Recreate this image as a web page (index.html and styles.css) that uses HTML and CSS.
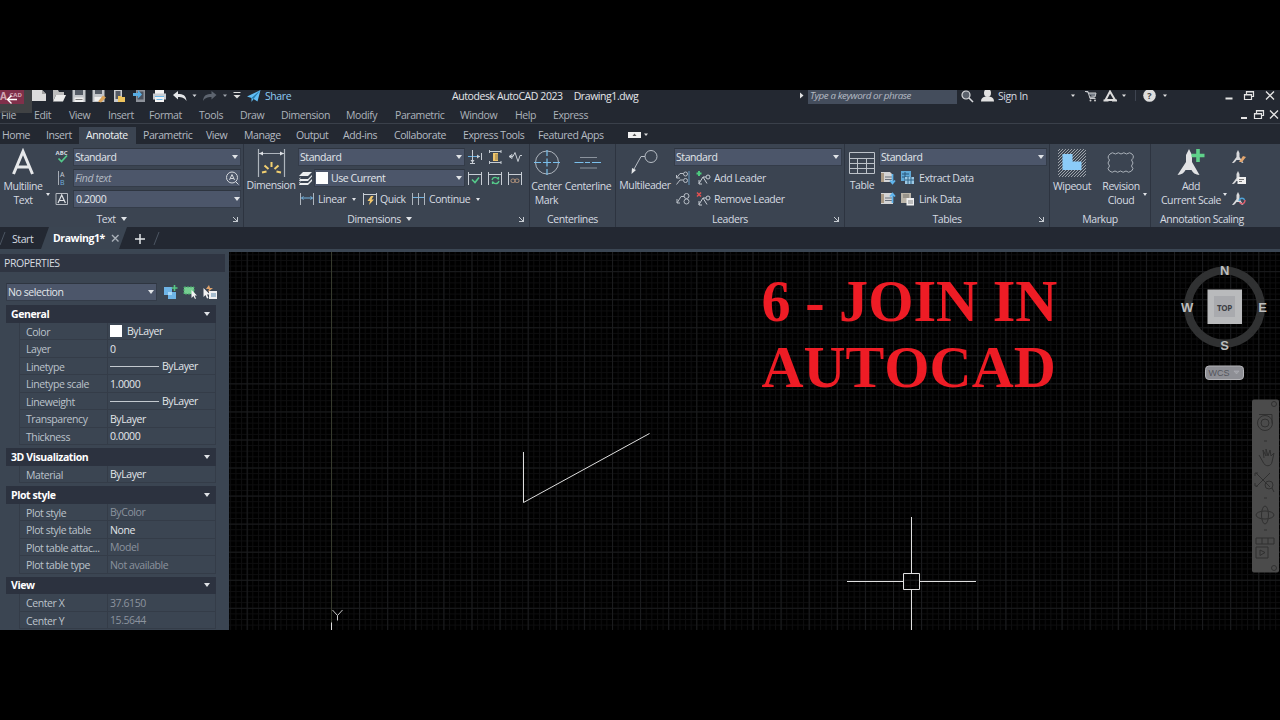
FILE: index.html
```html
<!DOCTYPE html>
<html lang="en">
<head>
  <meta charset="UTF-8">
  <meta name="viewport" content="width=device-width, initial-scale=1.0">
  <title>Autodesk AutoCAD 2023 - Drawing1.dwg</title>
  <link rel="stylesheet" href="styles.css">
</head>
<body>
<div class="app">

  <!-- title bar -->
  <header class="titlebar">
    <div class="back">
      <div class="logo"><b>A</b><span>CAD</span></div>
      <svg width="32" height="23" viewBox="0 0 32 23"><path d="M8 9.500h9M11.500 5.500l-4 4 4 4" fill="none" stroke="#fff" stroke-width="1.300"/></svg>
    </div>
    <div class="qat">
      <svg width="20" height="16" viewBox="0 0 20 16"><path d="M3 0h10l4 4v7H3z" fill="#dcdcdc"/><path d="M13 0v4h4z" fill="#a0a0a0"/></svg>
      <svg width="20" height="16" viewBox="0 0 20 16"><path d="M4 0h5l1 2h5v3H7l-3 6z" fill="#bdbdbd"/><path d="M7 5h10l-3 6.500H4z" fill="#ededed"/></svg>
      <svg width="20" height="16" viewBox="0 0 20 16"><path d="M3.500 0h13v12h-13z" fill="#c3c6ca"/><path d="M6 0h8v5H6z" fill="#555c66"/><path d="M5.500 7.500h9V12h-9z" fill="#f0f0f0"/><path d="M6.500 9.500h7" stroke="#777"/></svg>
      <svg width="20" height="16" viewBox="0 0 20 16"><path d="M3.500 0h12v12h-12z" fill="#c3c6ca"/><path d="M6 0h7v4H6z" fill="#555c66"/><path d="M5.500 7h7v4h-7z" fill="#f0f0f0"/><path d="M9 11.500l5-6 3 2-5 5z" fill="#dba45a"/></svg>
      <svg width="20" height="16" viewBox="0 0 20 16"><path d="M5 0h8v12H5z" fill="#c9cbce"/><path d="M6.500 1h5v8h-5z" fill="#555b66"/><path d="M9 6h3l1 1h3v5H9z" fill="#efc45d"/></svg>
      <svg width="20" height="16" viewBox="0 0 20 16"><path d="M7 0h9v12H7z" fill="#8d929a"/><path d="M8.500 1.500h6v8h-6z" fill="#4c535f"/><path d="M4 3h5V0l4 4.500-4 4V6H4z" fill="#58aee4"/></svg>
      <svg width="20" height="16" viewBox="0 0 20 16"><path d="M6 0h9v4H6z" fill="#f2f2f2"/><path d="M4 3.500h13v6H4z" fill="#c8cdd2"/><path d="M6 7h9v5H6z" fill="#f4f4f4"/><path d="M6 6.500h9M7.500 9.500h6" stroke="#6bb7e8"/></svg>
      <svg width="20" height="16" viewBox="0 0 20 16"><path d="M4 5l5-4v3c5 0 8 1 8.500 7-2-3-4-4-8.500-4v2.500z" fill="#e4e6e8"/></svg>
      <svg width="11" height="16" viewBox="0 0 11 16"><path d="M3.500 4.500h4l-2 2.500z" fill="#d5d8dc"/></svg>
      <svg width="20" height="16" viewBox="0 0 20 16"><path d="M16.500 5l-5-4v3c-5 0-8 1-8.500 7 2-3 4-4 8.500-4v2.500z" fill="#5d646f"/></svg>
      <svg width="10" height="16" viewBox="0 0 10 16"><path d="M3 4.500h4L5 7z" fill="#a0a5ac"/></svg>
      <svg width="14" height="16" viewBox="0 0 14 16"><path d="M3.500 2.500h7" stroke="#ddd"/><path d="M3.500 5h7L7 8.500z" fill="#ddd"/></svg>
      <svg width="20" height="16" viewBox="0 0 20 16"><path d="M3 6.500L16.500 0l-3 11.500-4-2.500-2 3V8z" fill="#62bdf4"/><path d="M7.500 8l9-8-7 9" fill="#247aac"/></svg>
      <span class="share">Share</span>
    </div>
    <div class="doc-title"><span>Autodesk AutoCAD 2023</span><span>Drawing1.dwg</span></div>
    <div class="search-area">
      <svg width="10" height="16" viewBox="0 0 10 16"><path d="M1 2.500l3.500 3L1 8.500z" fill="#e2e2e2"/></svg>
      <div class="search">Type a keyword or phrase</div>
      <svg width="20" height="16" viewBox="0 0 20 16"><circle cx="9" cy="5" r="4" fill="#5a616c" stroke="#d8dadd" stroke-width="1.200"/><path d="M12 8l4 4" stroke="#d8dadd" stroke-width="1.600"/></svg>
      <svg width="21" height="16" viewBox="0 0 21 16"><ellipse cx="10.500" cy="3" rx="3.500" ry="4" fill="#e2e2e2"/><path d="M4 11.500c0-4 3-5 6.500-5s6.500 1 6.500 5z" fill="#e2e2e2"/></svg>
      <span class="sign">Sign In</span>
      <svg class="acct" width="104" height="16" viewBox="0 0 104 16">
        <path d="M3 4.500h4L5 7z" fill="#e2e2e2"/>
        <path d="M17 1.500h3l2 7h5.500M20.500 3H28l-1 4h-5" fill="#777e88" stroke="#c8cacd"/><circle cx="22.500" cy="10.500" r="1" fill="#ccc"/><circle cx="27" cy="10.500" r="1" fill="#ccc"/>
        <path d="M42 1.500L37.500 10h9.500z" fill="none" stroke="#dcdcdc" stroke-width="2"/><path d="M35.500 10.500h5M44 10.500h5" stroke="#dcdcdc" stroke-width="2"/>
        <path d="M54 4.500h4L56 7z" fill="#e2e2e2"/><path d="M67.500 0v11" stroke="#3e4450"/>
        <circle cx="81.500" cy="5.500" r="6.300" fill="#dedede"/><text x="81.300" y="9" text-anchor="middle" class="qmark">?</text>
        <path d="M95 4.500h4L97 7z" fill="#e2e2e2"/>
      </svg>
      <svg class="win" width="54" height="16" viewBox="0 0 54 16" fill="none" stroke="#e4e4e4"><path d="M1.500 8.500h7" stroke-width="2"/><path d="M20.500 4.500h7v5h-7zM22.500 4V1.500h7v5H28" stroke-width="1.200"/><path d="M20 4.800h8M22 1.800h8" stroke-width="1.500"/><path d="M42 1.500l8 8M50 1.500l-8 8" stroke-width="1.300"/></svg>
    </div>
  </header>

  <nav class="menubar">
    <span>File</span><span>Edit</span><span>View</span><span>Insert</span><span>Format</span><span>Tools</span><span>Draw</span><span>Dimension</span><span>Modify</span><span>Parametric</span><span>Window</span><span>Help</span><span>Express</span>
    <svg width="42" height="14" viewBox="0 0 42 14" fill="none" stroke="#e4e4e4"><path d="M3 10h6" stroke-width="2"/><path d="M16.500 5.500h7v5h-7zM18.500 5V2.500h7v5H24" stroke-width="1.200"/><path d="M16 5.800h8M18 2.800h8" stroke-width="1.500"/><path d="M32 2.500l8 8M40 2.500l-8 8" stroke-width="1.300"/></svg>
  </nav>

  <nav class="tabs">
    <span>Home</span><span>Insert</span><span class="active">Annotate</span><span>Parametric</span><span>View</span><span>Manage</span><span>Output</span><span>Add-ins</span><span>Collaborate</span><span>Express Tools</span><span>Featured Apps</span>
    <svg width="24" height="12" viewBox="0 0 24 12"><path d="M1 3h13v6H1z" fill="#f0f0f0"/><path d="M5.500 7h4l-2-2.500z" fill="#555"/><path d="M17 4.500h4L19 7z" fill="#ddd"/></svg>
  </nav>

  <!-- ribbon -->
  <div class="ribbon">
    <section class="panel p-text">
      <div class="body">
        <div class="big">
          <svg width="28" height="29" viewBox="0 0 28 29"><path d="M4.500 26L14 3.500 23.500 26M7.500 19h13" fill="none" stroke="#e6e8ea" stroke-width="3"/></svg>
          <p>Multiline<br>Text</p><i class="caret tiny"></i>
        </div>
        <div class="rows icons">
          <svg width="20" height="18" viewBox="0 0 20 18"><text x="3.500" y="6.500" class="abc">ABC</text><path d="M6.500 10.500l3 3 5.500-6" fill="none" stroke="#53c98a" stroke-width="1.700"/></svg>
          <svg width="20" height="18" viewBox="0 0 20 18"><path d="M6.500 2v14" stroke="#a7adb5"/><text x="8" y="7.500" class="mini">A</text><text x="8" y="16" class="mini blue">B</text></svg>
          <svg width="20" height="18" viewBox="0 0 20 18"><path d="M4 3.500h11.500v11H4z" fill="none" stroke="#b4b9c0"/><path d="M6 13l3.700-8 3.700 8M7.200 10.500h5" fill="none" stroke="#e0e3e6" stroke-width="1.200"/></svg>
        </div>
        <div class="rows wide">
          <div class="select">Standard<i class="caret"></i></div>
          <div class="select find"><em>Find text</em><svg width="16" height="16" viewBox="0 0 16 16" fill="none" stroke="#d5d9de"><circle cx="8" cy="7.500" r="5.500"/><path d="M11.500 11.500l3 3M5.500 10L8 4.500l2.500 5.500M6.300 8.500h3.400"/></svg></div>
          <div class="select num">0.2000<i class="caret"></i></div>
        </div>
      </div>
      <footer>Text<i class="caret"></i><b class="launch"></b></footer>
    </section>

    <section class="panel p-dim">
      <div class="body">
        <div class="big">
          <svg width="30" height="31" viewBox="0 0 30 31" fill="none"><path d="M2.500 1v28M28.500 1v28" stroke="#aeb5bd" stroke-width="1.200"/><path d="M3 5.500h25" stroke="#aeb5bd"/><path d="M3 5.500l4-2v4zM28 5.500l-4-2v4z" fill="#dfe2e6"/><path d="M6 24.500l4.500-1M25 24.500l-4.500-1M8.500 17.500l4 3.500M22.500 17.500l-4 3.500M15.500 14v5" stroke="#f1cf70" stroke-width="2"/></svg>
          <p class="one">Dimension</p>
        </div>
        <div class="rows">
          <div class="line"><div class="select w166">Standard<i class="caret"></i></div>
            <svg width="20" height="18" viewBox="0 0 20 18" fill="none" stroke="#c7cdd4"><path d="M2 8.500h12" stroke="#65aee0"/><path d="M6.500 2v13M15.500 5v7M4 15.500h5"/><path d="M14 8.500l-3-2v4zM6.500 15l-2-3h4z" fill="#c7cdd4" stroke="none"/></svg>
            <svg width="20" height="18" viewBox="0 0 20 18" fill="none" stroke="#c7cdd4"><path d="M3 3.500h12M3 14.500h12M3.500 2v3M15 2v3M3.500 13v3M15 13v3"/><path d="M7 5h5v8H7z" fill="#efc56a" stroke="none"/><path d="M9 7h3M9 9h3M9 11h3" stroke="#6a5a38" stroke-width=".7"/></svg>
            <svg width="20" height="18" viewBox="0 0 20 18" fill="none" stroke="#c7cdd4"><path d="M3 8.500h4l2-4 3 9 2-6h2M3 8.500l3-2v4z"/></svg>
          </div>
          <div class="line">
            <svg width="16" height="18" viewBox="0 0 16 18" fill="#eceeef"><path d="M5 3h9l-4 4H1zM3 8l-2 2h9l4-4v1.500L10 12H1zM3 11.500L1 14h9l4-4v2l-4 4H1z"/></svg>
            <div class="select w150"><i class="swatch"></i>Use Current<i class="caret"></i></div>
            <svg width="20" height="18" viewBox="0 0 20 18" fill="none" stroke="#c7cdd4"><path d="M2.500 3v13M15.500 3v13M3 5.500h12.500"/><path d="M6 10.500l3 3 4-5" stroke="#55c98a" stroke-width="1.600"/></svg>
            <svg width="20" height="18" viewBox="0 0 20 18" fill="none" stroke="#c7cdd4"><path d="M2.500 3v13M15.500 3v13M3 5.500h12.500"/><path d="M6 11c1-3.500 5-3.500 6.500-.5V8M13 12c-1 3.500-5 3.500-6.500.5v2.500" stroke="#55c98a" stroke-width="1.300"/></svg>
            <svg width="20" height="18" viewBox="0 0 20 18" fill="none" stroke="#c7cdd4"><path d="M2.500 3v13M15.500 3v13M3 5.500h12.500"/><rect x="5" y="10" width="4" height="3.500" rx="1.500" stroke="#b9977d"/><rect x="9" y="10" width="4" height="3.500" rx="1.500" stroke="#b9977d"/></svg>
          </div>
          <div class="line cmds">
            <svg width="18" height="18" viewBox="0 0 18 18" fill="none" stroke="#aeb5bd"><path d="M1.500 3v12M14.500 3v12"/><path d="M2.500 8h11M4.500 6.500L2.500 8l2 1.500M11.500 6.500l2 1.500-2 1.500" stroke="#72b2df"/></svg>
            <span class="c1">Linear</span><i class="caret tiny"></i>
            <svg width="18" height="18" viewBox="0 0 18 18" fill="none" stroke="#c7cdd4"><path d="M1.500 3v12M14.500 3v12M2 4.500h12"/><path d="M9 6L5.500 11H8l-1 4 5-5.500H9.500l2-3.500z" fill="#efc56a" stroke="none"/></svg>
            <span class="c2">Quick</span>
            <svg width="18" height="18" viewBox="0 0 18 18" fill="none" stroke="#aeb5bd"><path d="M1.500 3v12M7.500 3v12M13.500 3v12"/><path d="M2 7.500h5M8 7.500h5" stroke="#72b2df"/></svg>
            <span class="c3">Continue</span><i class="caret tiny"></i>
          </div>
        </div>
      </div>
      <footer>Dimensions<i class="caret"></i><b class="launch"></b></footer>
    </section>

    <section class="panel p-center">
      <div class="body">
        <div class="big w33">
          <svg width="28" height="29" viewBox="0 0 28 29" fill="none"><circle cx="14" cy="14.500" r="11.500" stroke="#aeb5bd"/><path d="M1 14.500h7M10 14.500h8M20 14.500h7M14 2v6M14 10.500v8M14 21v6" stroke="#7bc0ec" stroke-width="1.200"/></svg>
          <p>Center<br>Mark</p>
        </div>
        <div class="big w50">
          <svg width="30" height="29" viewBox="0 0 30 29"><path d="M7 9.500h17M7 20h17" stroke="#8b939d"/><path d="M1.500 14.500h9M12 14.500h5M19 14.500h9" stroke="#7bc0ec"/></svg>
          <p>Centerline</p>
        </div>
      </div>
      <footer>Centerlines</footer>
    </section>

    <section class="panel p-lead">
      <div class="body">
        <div class="big">
          <svg width="30" height="31" viewBox="0 0 30 31" fill="none" stroke="#b8bec6"><circle cx="21" cy="8.500" r="6"/><path d="M15 8.500h-4L3.500 22"/><path d="M1.500 26l.5-6 4 2z" fill="#e4e6e8" stroke="none"/></svg>
          <p class="one">Multileader</p>
        </div>
        <div class="rows">
          <div class="select w167">Standard<i class="caret"></i></div>
          <div class="line">
            <svg width="20" height="18" viewBox="0 0 20 18" fill="none" stroke="#b8bec6"><circle cx="11.500" cy="5" r="2"/><circle cx="11.500" cy="11.500" r="2"/><path d="M9 4.500H6L2.500 9M9 11H6l-3.500 4.500M2.500 6v3H6"/><path d="M15 2v14" stroke="#6598c0"/></svg>
            <svg width="20" height="18" viewBox="0 0 20 18" fill="none" stroke="#c7cdd4"><circle cx="14" cy="8" r="2"/><path d="M12 8H9l-4 6.500M9 8l4 6.500M5 11v4h3"/><path d="M5 2v5M2.500 4.500h5" stroke="#4dca7e" stroke-width="2"/></svg>
            <span>Add Leader</span>
          </div>
          <div class="line">
            <svg width="20" height="18" viewBox="0 0 20 18" fill="none" stroke="#b8bec6"><circle cx="12.500" cy="6" r="2.500"/><circle cx="12.500" cy="11.500" r="2.500"/><path d="M10 6.500H7L3 13M3 9v4h3"/></svg>
            <svg width="20" height="18" viewBox="0 0 20 18" fill="none" stroke="#c7cdd4"><circle cx="14" cy="8" r="2"/><path d="M12 8H9l-4 6.500M9 8l4 6.500M5 11v4h3"/><path d="M3 2.500l4 4M7 2.500l-4 4" stroke="#e35151" stroke-width="1.500"/></svg>
            <span>Remove Leader</span>
          </div>
        </div>
      </div>
      <footer>Leaders<b class="launch"></b></footer>
    </section>

    <section class="panel p-table">
      <div class="body">
        <div class="big">
          <svg width="28" height="31" viewBox="0 0 28 31" fill="none" stroke="#bcc2c9"><path d="M1.500 4.500h25v21h-25zM1.500 10.500h25M1.500 15.500h25M1.500 20.500h25M9.500 10v15.500M18.500 10v15.500"/></svg>
          <p class="one">Table</p>
        </div>
        <div class="rows">
          <div class="select w167">Standard<i class="caret"></i></div>
          <div class="line">
            <svg width="20" height="18" viewBox="0 0 20 18"><path d="M2 3h9l3 3v7H2z" fill="#d4d5d6"/><path d="M2 4h3v9H2z" fill="#aa9b86"/><path d="M6 8h7M6 10.500h7" stroke="#68707a"/><path d="M13.500 5v9M11 11.500l2.500 3 2.500-3" stroke="#5fb4ec" stroke-width="1.700" fill="none"/></svg>
            <svg width="20" height="18" viewBox="0 0 20 18"><path d="M2 2h10v10H2z" fill="#5fa9d8"/><path d="M3 5h7M3 8h7M6 3v9" stroke="#2a577a"/><path d="M6 8h9v7H6z" fill="#9cc8e4"/><path d="M6 11h9M9 8v7M12 8v7" stroke="#2f6488"/></svg>
            <span>Extract Data</span>
          </div>
          <div class="line">
            <svg width="20" height="18" viewBox="0 0 20 18"><path d="M2 3h12v11H2z" fill="#d4d5d6"/><path d="M2 4h3v9H2z" fill="#aa9b86"/><path d="M6 8h7M6 10.500h7" stroke="#68707a"/><path d="M13.500 13V4M11 6.500l2.500-3 2.500 3" stroke="#5fb4ec" stroke-width="1.700" fill="none"/></svg>
            <svg width="20" height="18" viewBox="0 0 20 18"><path d="M2 3h10v10H2z" fill="#bbb5a9"/><path d="M4 5h6M4 7h6" stroke="#77736c"/><path d="M7.500 8H15v7.500H7.500z" fill="#f0f0f0"/><path d="M9 11h5M9 13h5" stroke="#8a8a8a"/></svg>
            <span>Link Data</span>
          </div>
        </div>
      </div>
      <footer>Tables<b class="launch"></b></footer>
    </section>

    <section class="panel p-mark">
      <div class="body">
        <div class="big w44">
          <svg width="28" height="29" viewBox="0 0 28 29"><defs><pattern id="hatch" width="3" height="3" patternUnits="userSpaceOnUse"><path d="M-1 4L4-1M-1 1L1-1M2 4L4 2" stroke="#b7bcc2" stroke-width=".8"/></pattern></defs><path d="M0 1h28v28H0z" fill="url(#hatch)"/><path d="M4.500 6h10v7.500h9V22h-19z" fill="#8bcbf8"/></svg>
          <p>Wipeout</p>
        </div>
        <div class="big w54">
          <svg width="28" height="29" viewBox="0 0 28 29"><path d="M3 6q2-2.500 5.500 0 3-2.500 5.500 0 3-2.500 5.500 0 3.500-2.500 5.500 0 3 3-.5 6 3 3 0 6 3 3 0 5-3 2.500-5.500 0-3 2.500-5.500 0-3 2.500-5.500 0-3 2.500-5.500 0-3-2 0-5-3-3 0-6-3-3 .5-6z" fill="none" stroke="#aab1b9"/></svg>
          <p>Revision<br>Cloud</p><i class="caret tiny"></i>
        </div>
      </div>
      <footer>Markup</footer>
    </section>

    <section class="panel p-scale">
      <div class="body">
        <div class="big">
          <svg width="32" height="29" viewBox="0 0 32 29"><path d="M14 1l-3 6v7L2.500 27c4-.5 6-1.500 8-5h6c2 3.500 4 4.500 8 5L17 14V7z" fill="#e2e3e5"/><path d="M23 1v13M16.500 7.500h13" stroke="#5fd18a" stroke-width="3.600"/></svg>
          <p>Add<br>Current Scale</p><i class="caret tiny"></i>
        </div>
        <div class="rows icons">
          <svg width="20" height="18" viewBox="0 0 20 18"><path d="M9 2L7.500 5v4L3 15c2 0 3-.5 4.500-3h3c1 2 2 3 4 3l-4-6V5z" fill="#d9dadc"/><path d="M10 14l4-6 3 1-4 5z" fill="#e2a66f"/></svg>
          <svg width="20" height="18" viewBox="0 0 20 18"><path d="M9 2L7.500 5v4L3 15c2 0 3-.5 4.500-3h3c1 2 2 3 4 3l-4-6V5z" fill="#d9dadc"/><path d="M8.500 8H17v7H8.500z" fill="#f0f0f0"/><path d="M10 10.500h5M10 12.500h3" stroke="#777"/></svg>
          <svg width="20" height="18" viewBox="0 0 20 18"><path d="M9 2L7.500 5v4L3 15c2 0 3-.5 4.500-3h3c1 2 2 3 4 3l-4-6V5z" fill="#d9dadc"/><path d="M10 11c1-4 5-3 5.500-1" fill="none" stroke="#4ea3d8" stroke-width="1.400"/><path d="M16 10c0 4-4 5-5.500 2" fill="none" stroke="#d95f6e" stroke-width="1.400"/></svg>
        </div>
      </div>
      <footer>Annotation Scaling</footer>
    </section>
  </div>

  <div class="filetabs">
    <svg class="edge" width="8" height="18" viewBox="0 0 8 18"><path d="M0 15L5 2" stroke="#4c5562"/></svg>
    <span class="start">Start</span>
    <div class="current"><b>Drawing1*</b><svg width="9" height="9" viewBox="0 0 9 9"><path d="M1 1l6.500 6.500M7.500 1L1 7.500" stroke="#a9b0b8" stroke-width="1.400"/></svg></div>
    <svg width="44" height="18" viewBox="0 0 44 18"><path d="M8 9h10M13 4v10" stroke="#e3e6e9" stroke-width="1.500"/><path d="M27 15l5-13" stroke="#4c5562"/></svg>
  </div>

  <div class="workspace">
    <aside class="props">
      <div class="props-title">PROPERTIES</div>
      <div class="props-tools">
        <div class="select">No selection<i class="caret"></i></div>
        <svg width="20" height="18" viewBox="0 0 20 18"><path d="M4 4h8v8H4zM8 9h8v7H8z" fill="#6eb4e6"/><path d="M8 9h4v3H8z" fill="#a9d9f8"/><path d="M14.500 2v6M11.500 5h6" stroke="#56c783" stroke-width="1.600"/></svg>
        <svg width="20" height="18" viewBox="0 0 20 18"><path d="M4 4h10v7H4z" fill="#75ce91" stroke="#4ba76d" stroke-dasharray="2 1"/><path d="M11.500 7v8l2-2 1.500 3 1-.5-1.300-3h2.300z" fill="#f3f3f3"/></svg>
        <svg width="20" height="18" viewBox="0 0 20 18"><path d="M9 2L6 6h3l-1 3 5-4h-3z" fill="#dfa36c"/><path d="M3.500 5v9l2-2 1.500 3.500 1.500-.5-1.500-3.500h3z" fill="#f3f3f3"/><path d="M9 8h8v8H9z" fill="#f0f0f0"/><path d="M11 11h5M11 13h5" stroke="#5c89ab"/></svg>
      </div>

      <div class="group">
        <h3>General<i class="caret"></i></h3>
        <dl>
          <dt>Color</dt><dd><i class="swatch"></i>ByLayer</dd>
          <dt>Layer</dt><dd>0</dd>
          <dt>Linetype</dt><dd><i class="stroke"></i>ByLayer</dd>
          <dt>Linetype scale</dt><dd>1.0000</dd>
          <dt>Lineweight</dt><dd><i class="stroke"></i>ByLayer</dd>
          <dt>Transparency</dt><dd>ByLayer</dd>
          <dt>Thickness</dt><dd>0.0000</dd>
        </dl>
      </div>
      <div class="group">
        <h3>3D Visualization<i class="caret"></i></h3>
        <dl><dt>Material</dt><dd>ByLayer</dd></dl>
      </div>
      <div class="group">
        <h3>Plot style<i class="caret"></i></h3>
        <dl>
          <dt>Plot style</dt><dd class="off">ByColor</dd>
          <dt>Plot style table</dt><dd>None</dd>
          <dt>Plot table attac...</dt><dd class="off">Model</dd>
          <dt>Plot table type</dt><dd class="off">Not available</dd>
        </dl>
      </div>
      <div class="group">
        <h3>View<i class="caret"></i></h3>
        <dl>
          <dt>Center X</dt><dd class="off">37.6150</dd>
          <dt>Center Y</dt><dd class="off">15.5644</dd>
        </dl>
      </div>
    </aside>

    <main class="canvas">
      <svg width="1051" height="378" viewBox="229 252 1051 378">
        <defs>
          <pattern id="minor" x="331" y="271.200" width="5.620" height="5.610" patternUnits="userSpaceOnUse"><path d="M.5 0v6M0 .5h6" stroke="#0e0e0f"/></pattern>
          <pattern id="major" x="331" y="271.200" width="28.100" height="28.050" patternUnits="userSpaceOnUse"><path d="M.5 0v29M0 .5h29" stroke="#1b1c1e"/></pattern>
        </defs>
        <path d="M229 252h1051v378H229z" fill="url(#minor)"/>
        <path d="M229 252h1051v378H229z" fill="url(#major)"/>
        <path d="M331.500 252v371" stroke="#363a2d"/>
        <path d="M331.500 622.500v8" stroke="#ddd"/>
        <path d="M332.500 610l5 5.500 5-5.500M337.500 615.500v5" fill="none" stroke="#c9c9c9"/>

        <!-- drawn lines -->
        <path d="M523.500 452v50.500L649.500 433.500" fill="none" stroke="#dedede"/>

        <!-- crosshair -->
        <path d="M911.500 517v56M911.500 589v41M847 581.500h56M919 581.500h57" stroke="#e0e0e0"/>
        <path d="M903.500 573.500h16v16h-16z" fill="none" stroke="#e0e0e0"/>

        <!-- view cube -->
        <circle cx="1224.500" cy="307" r="36.500" fill="none" stroke="#303132" stroke-width="8"/>
        <path d="M1207.500 289.500h34.500v34.500h-34.500z" fill="#b9babc"/>
        <path d="M1214 296h21v21h-21z" fill="#a9aaae"/>
        <g class="compass" text-anchor="middle"><text x="1224.500" y="274.500">N</text><text x="1187" y="312">W</text><text x="1262.500" y="312">E</text><text x="1224.500" y="350">S</text></g>
        <text x="1224.500" y="310.500" text-anchor="middle" class="top">TOP</text>
        <rect x="1205.500" y="366" width="38" height="13.500" rx="3.500" fill="#8e8f95" stroke="#b4b4b8"/>
        <text x="1208.500" y="375.500" class="wcs">WCS</text><path d="M1234 371h5l-2.500 3z" fill="#9fa0a6" stroke="#b3b3b8" stroke-width=".5"/>

        <!-- navigation bar -->
        <rect x="1252" y="399.500" width="27" height="173" rx="2" fill="#4b4b4b"/>
        <g fill="none" stroke="#303030">
          <circle cx="1274" cy="404" r="2.500"/><circle cx="1274" cy="568" r="2.500"/>
          <circle cx="1265" cy="423" r="7.500"/><circle cx="1265" cy="423" r="4"/><path d="M1259 414.500h13v9"/>
          <path d="M1264 441h3"/>
          <path d="M1259 455l4 7c2 5 8 5 9 0l2-9-3 3-1-6-2 6-2-7v7l-3-6 1 8"/>
          <path d="M1256 473l14 14M1270 473l-14 14M1255 476v-3h3M1255 483v3h3"/><circle cx="1269" cy="485" r="4"/><path d="M1272 488l2 4"/>
          <path d="M1264 498h3"/>
          <ellipse cx="1265" cy="515" rx="9" ry="4"/><ellipse cx="1265" cy="515" rx="3.500" ry="9"/>
          <path d="M1264 530h3"/>
          <path d="M1256 538h18v6h-18zM1262 538v6M1268 538v6M1256 547h12v11h-12zM1260 550l5 2.500-5 3z"/>
        </g>
      </svg>
      <h1>6 - JOIN IN<br>AUTOCAD</h1>
    </main>
  </div>
</div>
</body>
</html>
```
FILE: styles.css
```css
* {
  box-sizing: border-box;
}
body {
  margin: 0;
  padding: 90px 0;
  height: 720px;
  background: #000;
  overflow: hidden;
  font-family: "Open Sans", "Noto Sans", sans-serif;
  font-size: 10.5px;
  letter-spacing: -0.42px;
  line-height: 14px;
  color: #d6dbe1;
}
svg {
  display: block;
  flex: none;
}
p, h1, h3, dl, dd {
  margin: 0;
}
.app {
  width: 1280px;
  height: 540px;
  overflow: hidden;
  background: #232831;
  display: flex;
  flex-direction: column;
  white-space: nowrap;
}

/* title bar */
.titlebar {
  height: 16px;
  display: flex;
  position: relative;
  padding-left: 29px;
  line-height: 12px;
  flex: none;
}
.back {
  position: absolute;
  left: 0;
  top: 0;
  width: 32px;
  height: 23px;
  background: rgba(75, 75, 75, 0.75);
}
.back svg {
  position: absolute;
  left: 0;
  top: 0;
}
.logo {
  width: 24px;
  height: 14px;
  background: #80304a;
  color: #d3a9b5;
  display: flex;
  line-height: 12px;
}
.logo b {
  font-size: 10px;
}
.logo span {
  margin-left: 3px;
  font-size: 6px;
  font-weight: bold;
  letter-spacing: 0;
  line-height: 10px;
}
.qat {
  display: flex;
  width: 423px;
}
.share {
  margin-left: 1px;
  color: #8ecbf5;
}
.doc-title {
  display: flex;
  gap: 11px;
  width: 347px;
  color: #e3e6e9;
  line-height: 13px;
}
.search-area {
  display: flex;
}
.search {
  width: 149px;
  height: 14px;
  margin-left: -1px;
  padding-left: 2px;
  background: #444d5c;
  color: #b5bbc3;
  font-style: italic;
  font-size: 9.8px;
}
.sign {
  width: 70px;
}
.win {
  margin-left: 52px;
}
.qmark {
  font-size: 9px;
  font-weight: bold;
  fill: #444;
}

.menubar {
  height: 18px;
  border-bottom: 1px solid #3a404a;
  display: grid;
  grid-template-columns: 33px 35px 39px 41px 50px 41px 41px 65px 49px 65px 55px 38px 685px 42px;
  padding-left: 1px;
  line-height: 18px;
  color: #adb3bb;
  flex: none;
}
.menubar svg {
  margin-top: 2px;
}
.tabs {
  height: 20px;
  padding-top: 3px;
  display: grid;
  grid-template-columns: 44px 33px 57px 63px 38px 52px 47px 51px 69px 75px 96px 24px;
  padding-left: 2px;
  line-height: 17px;
  color: #b5bbc3;
  flex: none;
}
.tabs span:nth-child(n+4) {
  padding-left: 7px;
}
.tabs .active {
  background: #3b4451;
  color: #f0f2f4;
  padding-left: 7px;
}
.tabs svg {
  margin-top: 2px;
}

/* ribbon */
.ribbon {
  height: 83px;
  background: #3b4451;
  display: flex;
  flex: none;
}
.panel {
  border-right: 1px solid #2d3440;
  display: flex;
  flex-direction: column;
}
.body {
  height: 68px;
  padding-top: 4px;
  display: flex;
}
.panel footer {
  position: relative;
  height: 14px;
  display: flex;
  justify-content: center;
  align-items: center;
  gap: 5px;
}
.launch {
  position: absolute;
  right: 5px;
  top: 5px;
  width: 5px;
  height: 5px;
  border-right: 1px solid #c5cad0;
  border-bottom: 1px solid #c5cad0;
  background: linear-gradient(45deg, transparent 40%, #c5cad0 40%, #c5cad0 60%, transparent 60%);
  background: linear-gradient(to top right, transparent 38%, #c5cad0 38%, #c5cad0 62%, transparent 62%);
}
.big {
  position: relative;
  text-align: center;
  line-height: 13.5px;
}
.big svg {
  margin: 0 auto;
}
.big p {
  margin-top: 3px;
}
.big p.one {
  margin-top: 0;
}
.big .caret {
  position: absolute;
  right: 1px;
  top: 45px;
}
.rows {
  display: flex;
  flex-direction: column;
  gap: 3px;
}
.line {
  display: flex;
  height: 18px;
  line-height: 18px;
}
.select {
  height: 18px;
  padding: 0 2px 0 1px;
  background: #4c566a;
  border: 1px solid #343c49;
  border-top-color: #2e3540;
  line-height: 16px;
  display: flex;
  align-items: center;
  color: #e2e6ea;
}
.select .caret,
.select svg {
  margin-left: auto;
}
.caret {
  border: 3.5px solid transparent;
  border-top: 4px solid #e0e3e7;
  border-bottom: 0;
}
.caret.tiny {
  border-width: 2.5px;
  border-top-width: 3px;
  border-bottom: 0;
}
.swatch {
  width: 12px;
  height: 12px;
  background: #fff;
  margin-right: 3px;
}
.find {
  padding-right: 0;
}
.find em {
  color: #b3b9c2;
}
.num {
  padding-left: 2px;
  padding-right: 0;
}
.w166 { width: 167px; margin-right: 1px; }
.w150 { width: 151px; margin-right: 1px; }
.w167 { width: 168px; }

.p-text { width: 244px; }
.p-text .big { width: 46px; }
.p-text .big .caret { right: -4px; }
.p-text .icons { margin-left: 6px; }
.p-text .wide { width: 168px; margin-left: 1px; }
.p-text footer { padding-right: 20px; }
.p-dim { width: 286px; }
.p-dim .big { width: 54px; }
.p-dim footer { padding-right: 14px; }
.cmds .caret { align-self: center; }
.cmds svg { margin-left: 1px; }
.c1 { width: 34px; }
.c2 { width: 30px; }
.c3 { width: 47px; }
.cmds .c1 + .caret { margin-right: 5px; }
.cmds svg:first-child { margin-right: 1px; }
.p-center { width: 86px; }
.w33 { width: 33px; }
.w50 { width: 50px; }
.p-lead { width: 229px; }
.p-lead .big { width: 58px; }
.p-table { width: 205px; }
.p-table .big { width: 34px; }
.p-mark { width: 101px; }
.w44 { width: 44px; }
.w54 { width: 54px; }
.p-scale { width: 129px; border-right: 0; }
.p-scale .big { width: 77px; padding-left: 3px; }
.p-scale footer { padding-right: 27px; }
.p-scale .icons { margin-left: 1px; }

/* drawing tabs */
.filetabs {
  height: 25px;
  background: #232832;
  border-bottom: 3px solid #3b4653;
  display: flex;
  line-height: 24px;
  flex: none;
}
.filetabs > svg {
  margin-top: 3px;
}
.start {
  width: 35px;
  margin-left: 4px;
}
.current {
  width: 86px;
  height: 22px;
  margin-left: -6px;
  padding-left: 12px;
  display: flex;
  align-items: center;
  gap: 6px;
  background: #3b4552;
  clip-path: polygon(8px 0, 100% 0, 78px 100%, 0 100%);
  color: #fff;
}

/* properties palette */
.workspace {
  flex: 1;
  display: flex;
  min-height: 0;
}
.props {
  width: 229px;
  background: #3b4552;
  padding-top: 2px;
  overflow: hidden;
  flex: none;
}
.props-title {
  width: 225px;
  height: 18px;
  padding-left: 4px;
  background: #2f3542;
  line-height: 18px;
}
.props-tools {
  display: flex;
  padding: 11px 0 0 6px;
  height: 33px;
}
.props-tools .select {
  width: 151px;
  margin-right: 3px;
}
.group {
  width: 210px;
  margin: 0 0 3px 6px;
}
.group h3 {
  height: 17.5px;
  padding: 0 6px 0 5px;
  background: #2c323f;
  color: #fff;
  font-size: 10.5px;
  line-height: 18.5px;
  display: flex;
  justify-content: space-between;
  align-items: center;
}
.group dl {
  margin-left: 13px;
  border-left: 1px solid #343c48;
  border-right: 1px solid #343c48;
  display: grid;
  grid-template-columns: 88px 107px;
}
.group dt,
.group dd {
  height: 17.5px;
  line-height: 18px;
  border-bottom: 1px solid #343c48;
}
.group dt {
  padding-left: 6px;
  color: #bcc3cb;
  border-right: 1px solid #343c48;
}
.group dd {
  padding: 1px 0 0 2px;
  display: flex;
  align-items: center;
  color: #e3e7eb;
}
.group dd.off {
  color: #8b939e;
}
.group .swatch {
  margin-right: 5px;
}
.stroke {
  width: 49px;
  height: 1px;
  margin-right: 3px;
  background: #c3c9cf;
}

/* model space */
.canvas {
  position: relative;
  background: #000;
}
.canvas h1 {
  position: absolute;
  left: 532.5px;
  top: 17px;
  font-family: "Liberation Serif", serif;
  font-size: 58.2px;
  font-kerning: none;
  letter-spacing: 0;
  line-height: 66px;
  color: #ee1c25;
}
.compass {
  font: bold 13px "Liberation Sans", sans-serif;
  fill: #bdbdbd;
}
.top {
  font: bold 8px "Open Sans", sans-serif;
  fill: #3c3e44;
}
.wcs {
  font: 9px "Liberation Sans", sans-serif;
  letter-spacing: 0;
  fill: #54555c;
}
.abc {
  font-size: 6px;
  font-weight: bold;
  letter-spacing: 0;
  fill: #d6dbe1;
}
.mini {
  font-size: 7px;
  fill: #c7cdd4;
}
.mini.blue {
  fill: #72b2df;
}
```
